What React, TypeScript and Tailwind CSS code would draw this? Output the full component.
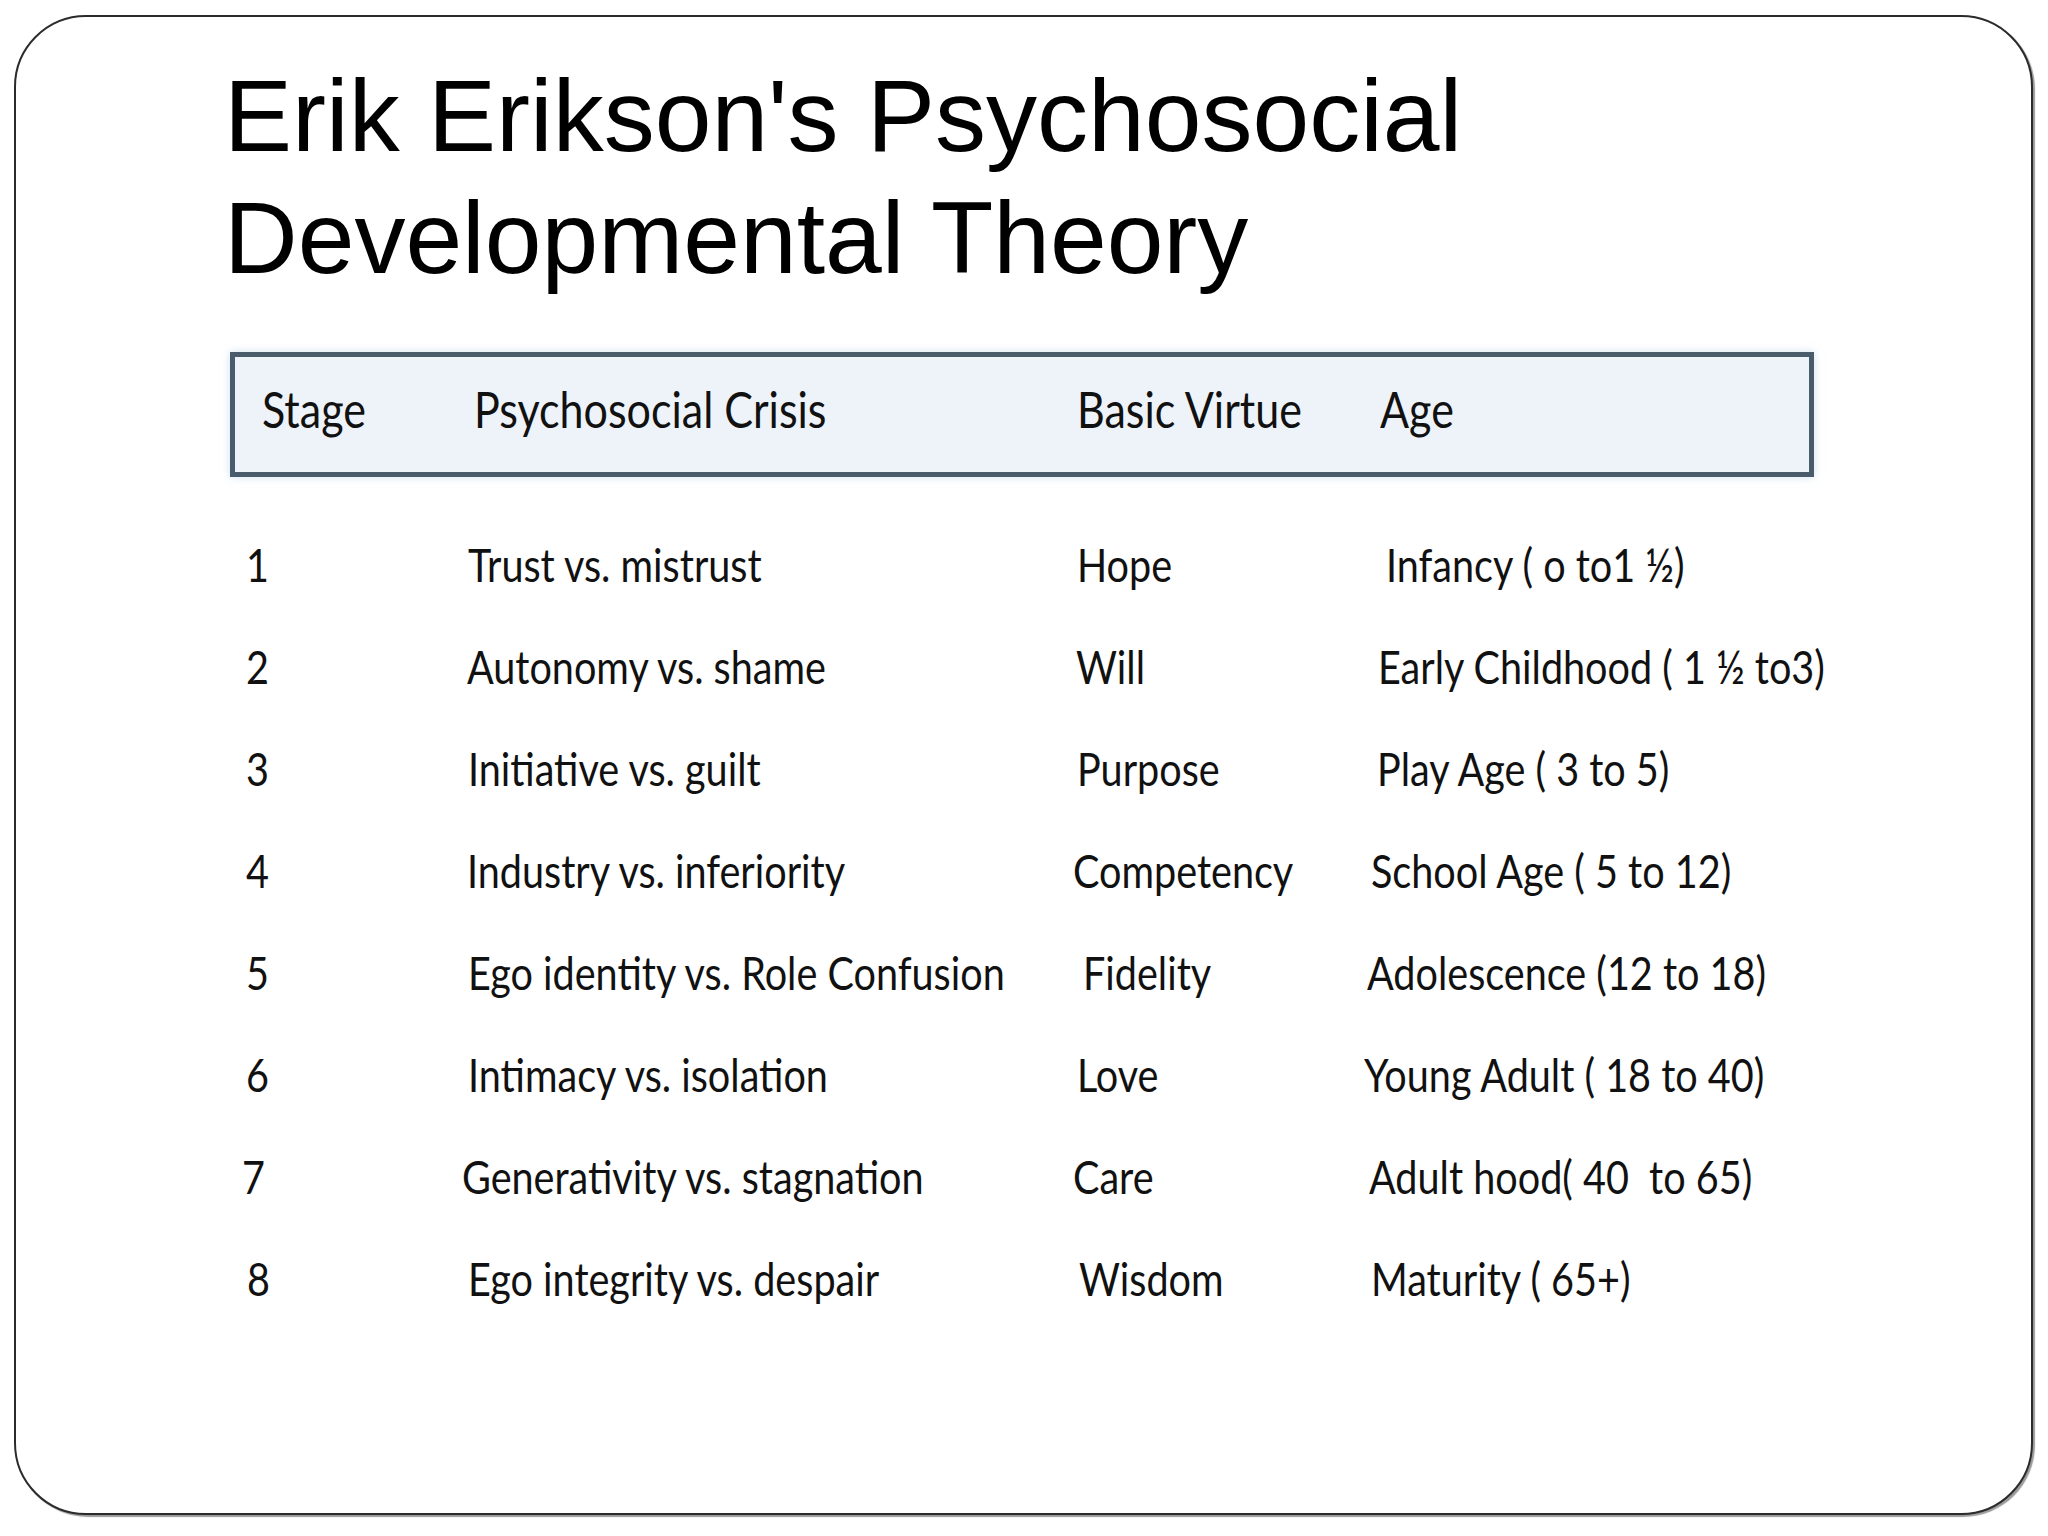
import React from "react";

type Row = {
  s: string;
  sc: string;
  c: string;
  cc: string;
  v: string;
  vc: string;
  a: string;
  ac: string;
};

const rows: Row[] = [
  { s: "1", sc: "ml-[2px]", c: "Trust vs. mistrust", cc: "ml-[1px]", v: "Hope", vc: "ml-[0px]", a: "Infancy ( o to1 \u00bd)", ac: "ml-[14px]" },
  { s: "2", sc: "ml-[2px]", c: "Autonomy vs. shame", cc: "ml-[0px]", v: "Will", vc: "ml-[-1px]", a: "Early Childhood ( 1 \u00bd to3)", ac: "ml-[6px]" },
  { s: "3", sc: "ml-[2px]", c: "Initiative vs. guilt", cc: "ml-[1px]", v: "Purpose", vc: "ml-[0px]", a: "Play Age ( 3 to 5)", ac: "ml-[5px]" },
  { s: "4", sc: "ml-[2px]", c: "Industry vs. inferiority", cc: "ml-[0px]", v: "Competency", vc: "ml-[-4px]", a: "School Age ( 5 to 12)", ac: "ml-[-1px]" },
  { s: "5", sc: "ml-[2px]", c: "Ego identity vs. Role Confusion", cc: "ml-[1px]", v: "Fidelity", vc: "ml-[6px]", a: "Adolescence (12 to 18)", ac: "ml-[-5px]" },
  { s: "6", sc: "ml-[2px]", c: "Intimacy vs. isolation", cc: "ml-[1px]", v: "Love", vc: "ml-[0px]", a: "Young Adult ( 18 to 40)", ac: "ml-[-8px]" },
  { s: "7", sc: "ml-[-2px]", c: "Generativity vs. stagnation", cc: "ml-[-5px]", v: "Care", vc: "ml-[-4px]", a: "Adult hood( 40  to 65)", ac: "ml-[-3px]" },
  { s: "8", sc: "ml-[3px]", c: "Ego integrity vs. despair", cc: "ml-[1px]", v: "Wisdom", vc: "ml-[2px]", a: "Maturity ( 65+)", ac: "ml-[-1px]" },
];

function Txt({ children }: { children: React.ReactNode }) {
  return (
    <span className="inline-block whitespace-pre origin-left scale-x-[0.86] text-[#111111]">
      {children}
    </span>
  );
}

export default function App() {
  return (
    <div className="w-[2048px] h-[1536px] bg-white pt-[15px] pl-[14px]">
      <div className="w-[2019px] h-[1500px] rounded-[72px] border-2 border-[#2b2b2b] shadow-[2px_2px_1px_rgba(0,0,0,0.4)] bg-white flex flex-col overflow-hidden">
        <h1
          className="ml-[208px] mt-[38px] text-[102px] leading-[122px] text-black font-normal"
          style={{ fontFamily: '"Liberation Sans", Arial, sans-serif' }}
        >
          <div>Erik Erikson's Psychosocial</div>
          <div>Developmental Theory</div>
        </h1>

        <div
          className="text-[46px] leading-[46px]"
          style={{ fontFamily: 'Lato, "Noto Sans", sans-serif' }}
        >
          <div className="ml-[214px] mt-[53px] w-[1584px] h-[125px] border-[5px] border-[#4a5b6b] bg-[#eef3fa] shadow-[0_0_8px_rgba(170,200,225,0.55)] flex pt-[27px] pl-[27px] text-[50px] leading-[50px]">
            <div className="w-[212px]">
              <Txt>Stage</Txt>
            </div>
            <div className="w-[603px]">
              <Txt>Psychosocial Crisis</Txt>
            </div>
            <div className="w-[303px]">
              <Txt>Basic Virtue</Txt>
            </div>
            <div>
              <Txt>Age</Txt>
            </div>
          </div>

          <div className="ml-[228px] mt-[37px] flex flex-col">
            {rows.map((r) => (
              <div key={r.s} className="flex h-[102px] leading-[102px]">
                <div className="w-[223px]">
                  <div className={r.sc}>
                    <Txt>{r.s}</Txt>
                  </div>
                </div>
                <div className="w-[610px]">
                  <div className={r.cc}>
                    <Txt>{r.c}</Txt>
                  </div>
                </div>
                <div className="w-[295px]">
                  <div className={r.vc}>
                    <Txt>{r.v}</Txt>
                  </div>
                </div>
                <div>
                  <div className={r.ac}>
                    <Txt>{r.a}</Txt>
                  </div>
                </div>
              </div>
            ))}
          </div>
        </div>
      </div>
    </div>
  );
}
